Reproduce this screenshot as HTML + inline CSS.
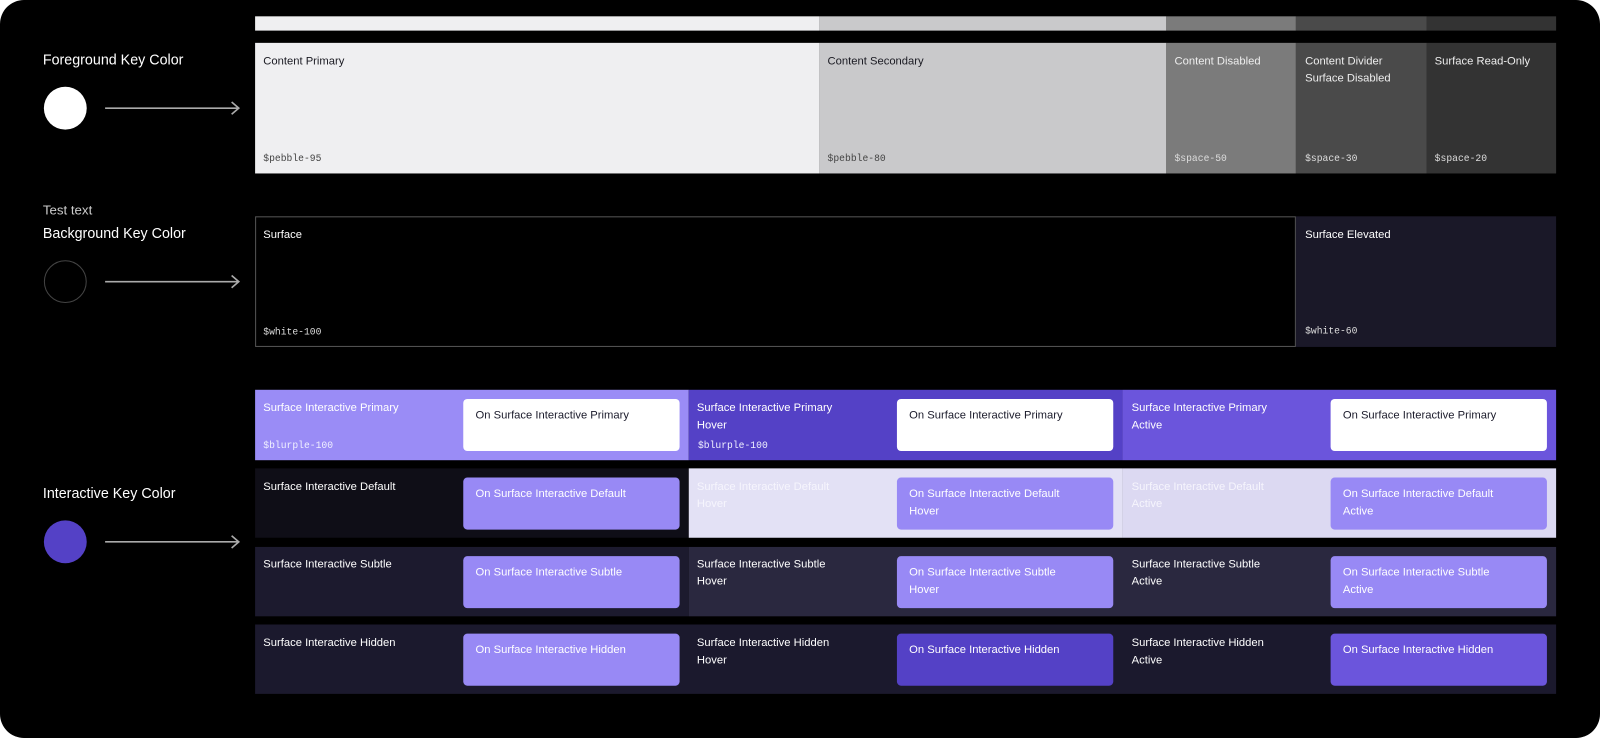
<!DOCTYPE html>
<html><head><style>
*{margin:0;padding:0;box-sizing:border-box}
body{width:1600px;height:738px;background:#fff;font-family:"Liberation Sans",sans-serif;overflow:hidden}
#bg{position:absolute;left:0;top:0;width:1600px;height:738px;background:#000;border-radius:24px}
#w{position:absolute;left:0;top:0;width:1568px;height:723px;transform:scale(1.0204);transform-origin:0 0}
.a{position:absolute}
.t{position:absolute;font-size:11px;line-height:17px;font-weight:normal;letter-spacing:0}
.m{position:absolute;font-family:"Liberation Mono",monospace;font-size:9.5px}
.lbl{position:absolute;left:42px;color:#fff;font-size:14px;font-weight:normal}
.card{position:absolute;border-radius:4px;width:212px;height:51px;padding:8px 12px;font-size:11px;line-height:17px;font-weight:normal}
</style></head><body>
<div id="bg"></div>
<div id="w">
<div class="a" style="left:250px;top:16px;width:553px;height:14px;background:#efeff1"></div>
<div class="a" style="left:803px;top:16px;width:340px;height:14px;background:#c9c9cb"></div>
<div class="a" style="left:1143px;top:16px;width:127px;height:14px;background:#7b7b7b"></div>
<div class="a" style="left:1270px;top:16px;width:128px;height:14px;background:#4a4a4a"></div>
<div class="a" style="left:1398px;top:16px;width:127px;height:14px;background:#333"></div>
<div class="a" style="left:250px;top:42px;width:553px;height:128px;background:#efeff1"></div>
<div class="a" style="left:803px;top:42px;width:340px;height:128px;background:#c9c9cb"></div>
<div class="a" style="left:1143px;top:42px;width:127px;height:128px;background:#7b7b7b"></div>
<div class="a" style="left:1270px;top:42px;width:128px;height:128px;background:#4a4a4a"></div>
<div class="a" style="left:1398px;top:42px;width:127px;height:128px;background:#333"></div>
<div class="t" style="left:258px;top:52px;color:#1a1a22">Content Primary</div>
<div class="m" style="left:258px;top:150px;color:#444">$pebble-95</div>
<div class="t" style="left:811px;top:52px;color:#1a1a22">Content Secondary</div>
<div class="m" style="left:811px;top:150px;color:#444">$pebble-80</div>
<div class="t" style="left:1151px;top:52px;color:#eee">Content Disabled</div>
<div class="m" style="left:1151px;top:150px;color:#ddd">$space-50</div>
<div class="t" style="left:1279px;top:52px;color:#eee">Content Divider<br>Surface Disabled</div>
<div class="m" style="left:1279px;top:150px;color:#ddd">$space-30</div>
<div class="t" style="left:1406px;top:52px;color:#eee">Surface Read-Only</div>
<div class="m" style="left:1406px;top:150px;color:#ddd">$space-20</div>
<div class="lbl" style="top:50px">Foreground Key Color</div>
<div class="a" style="left:43px;top:85px;width:42px;height:42px;border-radius:50%;background:#fff"></div>
<svg class="a" style="left:100px;top:96px" width="140" height="20"><path d="M3 10H134M127 4L134 10L127 16" stroke="#aaa" stroke-width="1.6" fill="none"/></svg>
<div class="a" style="left:250px;top:212px;width:1020px;height:128px;border:1px solid #555;background:#000"></div>
<div class="a" style="left:1270px;top:212px;width:255px;height:128px;background:#1a1828"></div>
<div class="t" style="left:258px;top:222px;color:#fff">Surface</div>
<div class="m" style="left:258px;top:320px;color:#ddd">$white-100</div>
<div class="t" style="left:1279px;top:222px;color:#fff">Surface Elevated</div>
<div class="m" style="left:1279px;top:319px;color:#ddd">$white-60</div>
<div class="a" style="left:42px;top:198px;color:#ccc;font-size:13px">Test text</div>
<div class="lbl" style="top:220px">Background Key Color</div>
<div class="a" style="left:43px;top:255px;width:42px;height:42px;border-radius:50%;border:1px solid #444"></div>
<svg class="a" style="left:100px;top:266px" width="140" height="20"><path d="M3 10H134M127 4L134 10L127 16" stroke="#aaa" stroke-width="1.6" fill="none"/></svg>
<div class="lbl" style="top:475px">Interactive Key Color</div>
<div class="a" style="left:43px;top:510px;width:42px;height:42px;border-radius:50%;background:#5441c6"></div>
<svg class="a" style="left:100px;top:521px" width="140" height="20"><path d="M3 10H134M127 4L134 10L127 16" stroke="#aaa" stroke-width="1.6" fill="none"/></svg>

<div class="a" style="left:250px;top:382px;width:425px;height:69px;background:#9a8cf6"></div>
<div class="a" style="left:675px;top:382px;width:425px;height:69px;background:#5441c6"></div>
<div class="a" style="left:1100px;top:382px;width:425px;height:69px;background:#6b55dc"></div>
<div class="t" style="left:258px;top:392px;color:#fff">Surface Interactive Primary</div>
<div class="m" style="left:258px;top:431px;color:#f0f0ff">$blurple-100</div>
<div class="t" style="left:683px;top:392px;color:#fff">Surface Interactive Primary<br>Hover</div>
<div class="m" style="left:684px;top:431px;color:#f0f0ff">$blurple-100</div>
<div class="t" style="left:1109px;top:392px;color:#fff">Surface Interactive Primary<br>Active</div>
<div class="card" style="left:454px;top:391px;background:#fff;color:#1a1a2a">On Surface Interactive Primary</div>
<div class="card" style="left:879px;top:391px;background:#fff;color:#1a1a2a">On Surface Interactive Primary</div>
<div class="card" style="left:1304px;top:391px;background:#fff;color:#1a1a2a">On Surface Interactive Primary</div>
<div class="a" style="left:250px;top:459px;width:425px;height:68px;background:#0f0e17"></div>
<div class="a" style="left:675px;top:459px;width:425px;height:68px;background:#e3e1f5"></div>
<div class="a" style="left:1100px;top:459px;width:425px;height:68px;background:#dcd9f2"></div>
<div class="t" style="left:258px;top:469px;color:#fff">Surface Interactive Default</div>
<div class="t" style="left:683px;top:469px;color:#f6f5fd">Surface Interactive Default<br>Hover</div>
<div class="t" style="left:1109px;top:469px;color:#f6f5fd">Surface Interactive Default<br>Active</div>
<div class="card" style="left:454px;top:468px;background:#9889f5;color:#fff">On Surface Interactive Default</div>
<div class="card" style="left:879px;top:468px;background:#9889f5;color:#fff">On Surface Interactive Default<br>Hover</div>
<div class="card" style="left:1304px;top:468px;background:#9889f5;color:#fff">On Surface Interactive Default<br>Active</div>
<div class="a" style="left:250px;top:536px;width:425px;height:68px;background:#1c1a2e"></div>
<div class="a" style="left:675px;top:536px;width:850px;height:68px;background:#2a283f"></div>
<div class="t" style="left:258px;top:545px;color:#fff">Surface Interactive Subtle</div>
<div class="t" style="left:683px;top:545px;color:#fff">Surface Interactive Subtle<br>Hover</div>
<div class="t" style="left:1109px;top:545px;color:#fff">Surface Interactive Subtle<br>Active</div>
<div class="card" style="left:454px;top:545px;background:#9889f5;color:#fff">On Surface Interactive Subtle</div>
<div class="card" style="left:879px;top:545px;background:#9889f5;color:#fff">On Surface Interactive Subtle<br>Hover</div>
<div class="card" style="left:1304px;top:545px;background:#9889f5;color:#fff">On Surface Interactive Subtle<br>Active</div>
<div class="a" style="left:250px;top:612px;width:1275px;height:68px;background:#1b192d"></div>
<div class="t" style="left:258px;top:622px;color:#fff">Surface Interactive Hidden</div>
<div class="t" style="left:683px;top:622px;color:#fff">Surface Interactive Hidden<br>Hover</div>
<div class="t" style="left:1109px;top:622px;color:#fff">Surface Interactive Hidden<br>Active</div>
<div class="card" style="left:454px;top:621px;background:#9889f5;color:#fff">On Surface Interactive Hidden</div>
<div class="card" style="left:879px;top:621px;background:#5441c6;color:#fff">On Surface Interactive Hidden</div>
<div class="card" style="left:1304px;top:621px;background:#6b55dc;color:#fff">On Surface Interactive Hidden</div>
</div>
</body></html>
